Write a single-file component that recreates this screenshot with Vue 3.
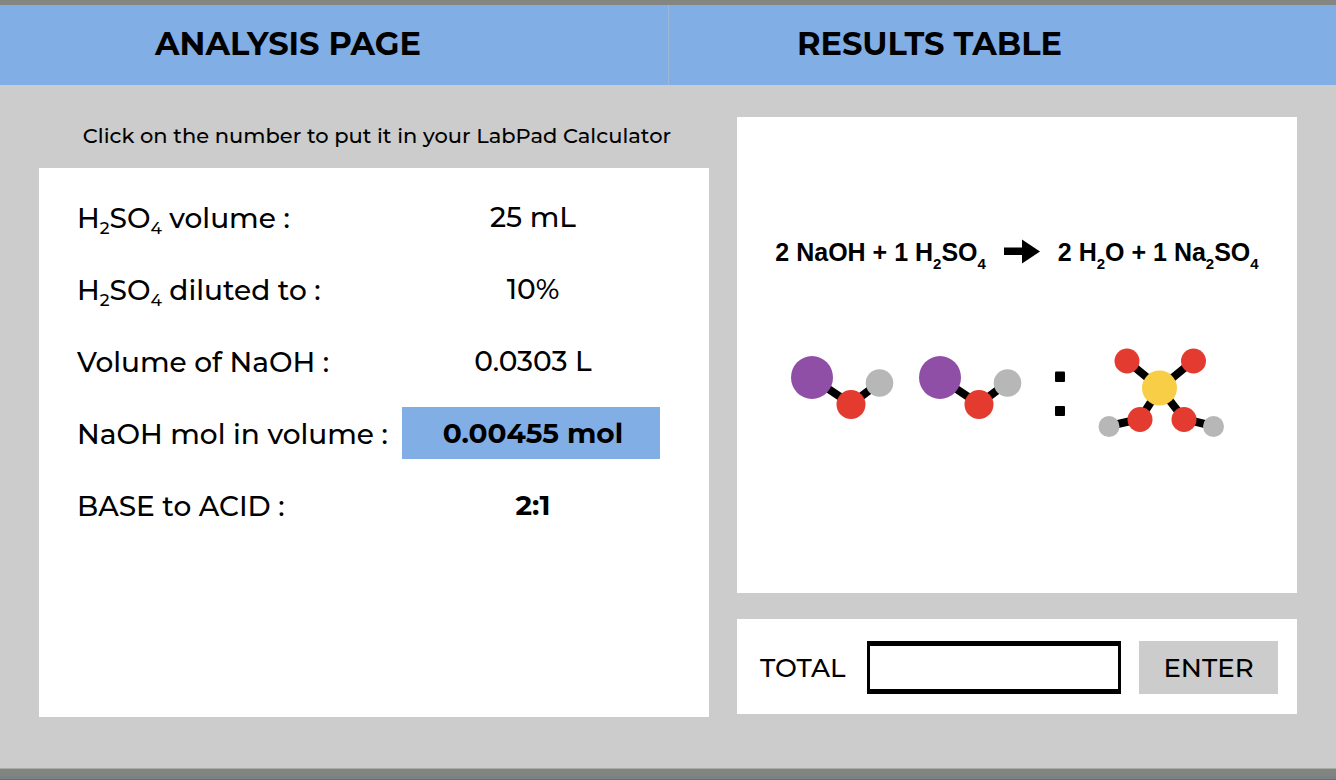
<script setup>
import { ref } from 'vue'

const rows = [
  { label: ['H', 2, 'SO', 4, ' volume :'], value: '25 mL' },
  { label: ['H', 2, 'SO', 4, ' diluted to :'], value: '10%' },
  { label: ['Volume of NaOH :'], value: '0.0303 L' },
  { label: ['NaOH mol in volume :'], value: '0.00455 mol', strong: true, selected: true },
  { label: ['BASE to ACID :'], value: '2:1', strong: true }
]

const reactants = ['2 NaOH + 1 H', 2, 'SO', 4]
const products = ['2 H', 2, 'O + 1 Na', 2, 'SO', 4]

const total = ref('')

function pick(value) {
  total.value = String(parseFloat(value))
}
</script>

<template>
  <div class="page">
    <header class="tabs">
      <h1 class="tab">ANALYSIS PAGE</h1>
      <h1 class="tab">RESULTS TABLE</h1>
    </header>

    <main class="content">
      <section class="analysis">
        <p class="hint">Click on the number to put it in your LabPad Calculator</p>
        <dl class="panel values">
          <template v-for="row in rows" :key="row.value">
            <dt class="name">
              <span><template v-for="(part, i) in row.label" :key="i"><sub v-if="typeof part === 'number'">{{ part }}</sub><template v-else>{{ part }}</template></template></span>
            </dt>
            <dd class="cell">
              <button
                type="button"
                class="value"
                :class="{ strong: row.strong, selected: row.selected }"
                @click="pick(row.value)"
              >{{ row.value }}</button>
            </dd>
          </template>
        </dl>
      </section>

      <section class="results">
        <div class="panel reaction">
          <div class="equation">
            <span><template v-for="(part, i) in reactants" :key="i"><sub v-if="typeof part === 'number'">{{ part }}</sub><template v-else>{{ part }}</template></template></span>
            <svg class="arrow" width="36" height="26" viewBox="0 0 36 26" aria-hidden="true">
              <path d="M0 8.500H18V0.500L36 12.500L18 24.500V16H0Z" />
            </svg>
            <span><template v-for="(part, i) in products" :key="i"><sub v-if="typeof part === 'number'">{{ part }}</sub><template v-else>{{ part }}</template></template></span>
          </div>

          <svg class="molecules" width="480" height="110" viewBox="0 0 480 110" aria-hidden="true">
            <defs>
              <g id="hydroxide">
                <path class="bond" d="M35 38L74 64L102 43" />
                <ellipse class="sodium" cx="35" cy="37.500" rx="21" ry="21.500" />
                <circle class="oxygen" cx="74" cy="64.500" r="14.500" />
                <circle class="hydrogen" cx="102.500" cy="43" r="13.800" />
              </g>
            </defs>
            <use href="#hydroxide" />
            <use href="#hydroxide" x="128" />
            <rect x="278" y="31.500" width="10" height="10.500" rx="1" />
            <rect x="278" y="66" width="10" height="10" rx="1" />
            <path class="bond" d="M350 21L383 48L416 21M332 86L363 79L383 48L407 79L436 86" />
            <circle class="oxygen" cx="350" cy="21" r="12.500" />
            <circle class="oxygen" cx="416.500" cy="21" r="12.500" />
            <circle class="oxygen" cx="363" cy="79.500" r="12.500" />
            <circle class="oxygen" cx="407" cy="79.500" r="12.500" />
            <circle class="hydrogen" cx="332" cy="86.500" r="10.500" />
            <circle class="hydrogen" cx="436.500" cy="86.500" r="10.500" />
            <circle class="sulfur" cx="382.500" cy="48" r="17.500" />
          </svg>
        </div>

        <form class="panel total" @submit.prevent>
          <label for="total">TOTAL</label>
          <input id="total" v-model="total" type="text" />
          <button type="submit" class="enter">ENTER</button>
        </form>
      </section>
    </main>

    <div class="edge"></div>
  </div>
</template>

<style>
body {
  margin: 0;
}
</style>

<style scoped>
.page {
  box-sizing: border-box;
  display: flex;
  flex-direction: column;
  min-height: 100vh;
  border-top: 5px solid #848681;
  background: #ccc;
  color: #000;
  font-family: Montserrat, Inter, "Liberation Sans", sans-serif;
  font-weight: 500;
}

.tabs {
  display: grid;
  grid-template-columns: 1fr 1fr;
  background: #82aee6;
}

.tab {
  margin: 0;
  padding: 19px 92px 21px 0;
  font-size: 32px;
  font-weight: 700;
  line-height: 40px;
  text-align: center;
}

.tab + .tab {
  padding-right: 146px;
  border-left: 1px solid #9db6d8;
}

.content {
  flex: 1;
  display: grid;
  grid-template-columns: 670fr 560fr;
  gap: 28px;
  padding: 32px 39px 51px;
}

.analysis,
.results {
  display: flex;
  flex-direction: column;
  min-width: 0;
}

.results {
  gap: 26px;
  padding-bottom: 3px;
}

.hint {
  margin: 0;
  padding: 4px 0 17px 6px;
  font-size: 21px;
  line-height: 30px;
  text-align: center;
}

.panel {
  margin: 0;
  background: #fff;
}

.values {
  flex: 1;
  display: grid;
  grid-template-columns: 325fr 258fr;
  grid-auto-rows: 52px;
  row-gap: 20px;
  align-content: start;
  padding: 23px 49px 23px 38px;
  font-size: 28px;
  line-height: 36px;
}

.name {
  display: flex;
  align-items: center;
  padding-top: 2px;
  white-space: nowrap;
}

sub {
  font-size: 17px;
  line-height: 0;
  vertical-align: -6px;
}

.cell {
  display: flex;
  margin: 0;
}

.value {
  flex: 1;
  padding: 0 0 0 4px;
  border: 0;
  background: transparent;
  color: inherit;
  font: inherit;
  cursor: pointer;
}

.value.strong {
  font-weight: 700;
}

.selected {
  background: #82aee6;
}

.reaction {
  flex: 1;
  display: flex;
  flex-direction: column;
  align-items: center;
  gap: 73px;
  padding-top: 120px;
}

.equation {
  display: flex;
  align-items: center;
  gap: 18px;
  font-family: "Liberation Sans", Arial, sans-serif;
  font-size: 25px;
  font-weight: 700;
  line-height: 30px;
  white-space: nowrap;
}

.equation sub {
  font-size: 15px;
  vertical-align: -8px;
}

.arrow {
  flex: none;
}

.molecules {
  max-width: 100%;
}

.bond {
  fill: none;
  stroke: #000;
  stroke-width: 8;
}

.sodium {
  fill: #904fa7;
}

.oxygen {
  fill: #e33b30;
}

.hydrogen {
  fill: #b7b7b7;
}

.sulfur {
  fill: #f8ce46;
}

.total {
  display: flex;
  align-items: center;
  gap: 18px;
  padding: 22px 19px 20px 23px;
  font-size: 26px;
  line-height: 32px;
}

.total input {
  box-sizing: border-box;
  flex: 1;
  min-width: 0;
  height: 53px;
  margin-left: 4px;
  padding: 0 12px;
  border: solid #000;
  border-width: 5px 3px;
  background: #fff;
  color: inherit;
  font: inherit;
}

.enter {
  width: 139px;
  height: 53px;
  padding: 0;
  border: 0;
  background: #ccc;
  color: inherit;
  font: inherit;
  cursor: pointer;
}

.edge {
  height: 12px;
  background: linear-gradient(#a8aca8 1px, #82847f 1px 8px, #7b8286 8px 11px, #6c6e68 11px);
}
</style>
